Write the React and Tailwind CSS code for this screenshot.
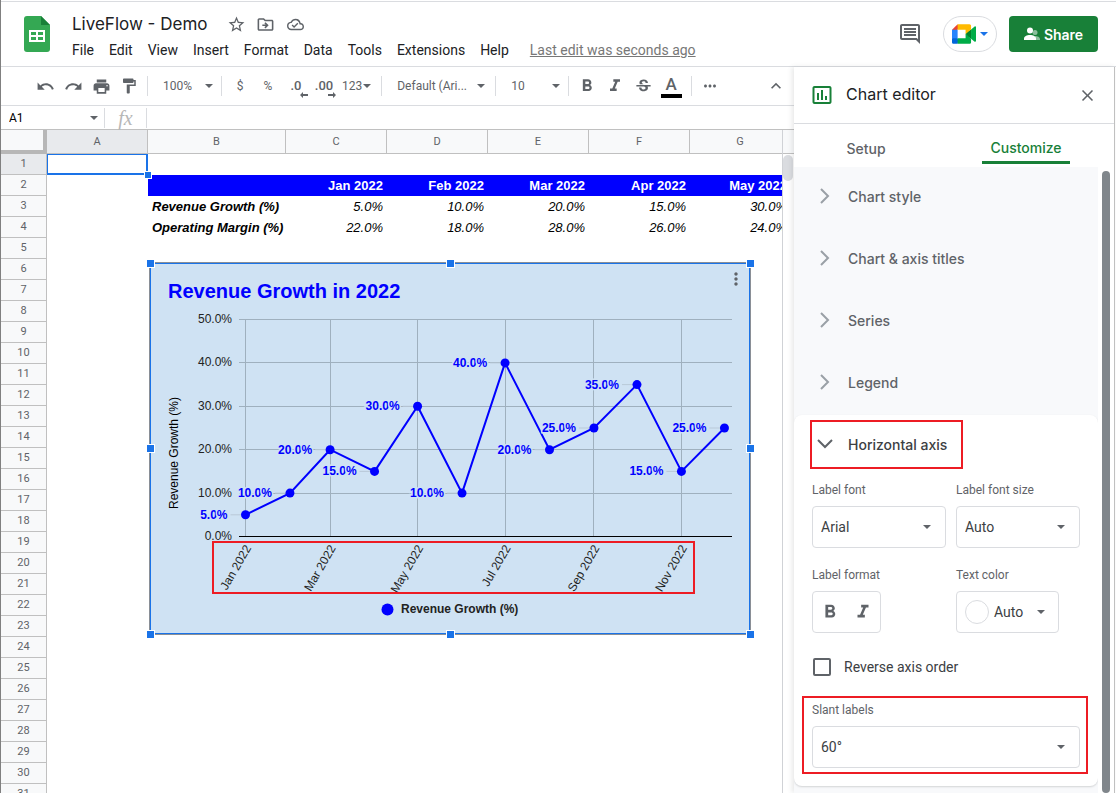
import React, { useState } from "react";
import {
  MdArrowDropDown,
  MdClose,
  MdExpandLess,
  MdFormatBold,
  MdFormatItalic,
  MdFormatPaint,
  MdInsertChartOutlined,
  MdMoreHoriz,
  MdMoreVert,
  MdOutlineCloudDone,
  MdOutlineDriveFileMove,
  MdOutlineInsertComment,
  MdPrint,
  MdRedo,
  MdStarBorder,
  MdStrikethroughS,
  MdUndo,
} from "react-icons/md";

const MENUS = ["File", "Edit", "View", "Insert", "Format", "Data", "Tools", "Extensions", "Help"];

const COLUMNS = ["A", "B", "C", "D", "E", "F", "G"];

const SHEET = {
  2: ["", "", "Jan 2022", "Feb 2022", "Mar 2022", "Apr 2022", "May 2022"],
  3: ["", "Revenue Growth (%)", "5.0%", "10.0%", "20.0%", "15.0%", "30.0%"],
  4: ["", "Operating Margin (%)", "22.0%", "18.0%", "28.0%", "26.0%", "24.0%"],
};

// day of year and growth in percent
const POINTS = [
  { day: 0, value: 5, label: "Jan 2022" },
  { day: 31, value: 10 },
  { day: 59, value: 20, label: "Mar 2022" },
  { day: 90, value: 15 },
  { day: 120, value: 30, label: "May 2022" },
  { day: 151, value: 10 },
  { day: 181, value: 40, label: "Jul 2022" },
  { day: 212, value: 20 },
  { day: 243, value: 25, label: "Sep 2022" },
  { day: 273, value: 35 },
  { day: 304, value: 15, label: "Nov 2022" },
  { day: 334, value: 25 },
];

const SECTIONS = ["Chart style", "Chart & axis titles", "Series", "Legend"];

const toX = (day) => 95.5 + day * 1.434;
const toY = (value) => 273.5 - value * 4.34;

const SheetsLogo = () => (
  <svg width="26" height="36" viewBox="0 0 26 36" aria-label="Sheets">
    <path d="M3 0h14l9 9v24a3 3 0 0 1-3 3H3a3 3 0 0 1-3-3V3a3 3 0 0 1 3-3z" fill="#34a853" />
    <path d="M17 0l9 9h-9z" fill="#188038" />
    <path d="M5 14v12h16V14zm2 2h5v3H7zm7 0h5v3h-5zm-7 5h5v3H7zm7 0h5v3h-5z" fill="#fff" fillRule="evenodd" />
  </svg>
);

const MeetLogo = () => (
  <svg width="24" height="20" viewBox="0 0 87.5 72">
    <path fill="#00832d" d="M49.5 36l8.53 9.75 11.47 7.33 2-17.02-2-16.64-11.69 6.44z" />
    <path fill="#0066da" d="M0 51.5V66c0 3.315 2.685 6 6 6h14.5l3-10.96-3-9.54-9.95-3z" />
    <path fill="#e94235" d="M20.5 0L0 20.5l10.55 3 9.95-3 2.95-9.41z" />
    <path fill="#2684fc" d="M20.5 20.5H0v31h20.5z" />
    <path fill="#00ac47" d="M82.6 8.68L69.5 19.42v33.66l13.16 10.79c1.97 1.54 4.85.135 4.85-2.37V11c0-2.535-2.945-3.925-4.91-2.32zM49.5 36v15.5h-29V72h43c3.315 0 6-2.685 6-6V53.08z" />
    <path fill="#ffba00" d="M63.5 0h-43v20.5h29V36l20-16.57V6c0-3.315-2.685-6-6-6z" />
  </svg>
);

const ShareIcon = () => (
  <svg width="16" height="14" viewBox="0 0 16 14" fill="#fff">
    <g opacity="0.5">
      <circle cx="11" cy="5.5" r="2.5" />
      <path d="M11 9c2.5 0 5 1.2 5 3v1h-5z" />
    </g>
    <circle cx="6" cy="3.5" r="3" />
    <path d="M6 8c3.2 0 6 1.5 6 3.5V13H0v-1.500C0 9.500 2.800 8 6 8z" />
  </svg>
);

const Caret = ({ className = "" }) => (
  <svg width="8" height="4" viewBox="0 0 8 4" className={`shrink-0 ${className}`}>
    <path d="M0 0h8L4 4z" fill="currentColor" />
  </svg>
);

const ToolButton = ({ label, children }) => (
  <button
    aria-label={label}
    className="relative w-7 h-7 shrink-0 flex items-center justify-center rounded hover:bg-gray-100"
  >
    {children}
  </button>
);

const Divider = ({ className = "" }) => <div className={`w-px h-5 shrink-0 bg-[#dadce0] ${className}`}></div>;

const ToolSelect = ({ label, value, className }) => (
  <div className={`relative shrink-0 flex items-center ${className}`}>
    <select aria-label={label} className="w-full appearance-none bg-transparent outline-none">
      <option>{value}</option>
    </select>
    <Caret className="absolute right-0 pointer-events-none" />
  </div>
);

const Header = () => (
  <header className="flex h-[66px] shrink-0 items-start border-y border-[#dadce0] pt-3.5 pl-[23px] pr-[18px]">
    <SheetsLogo />
    <div className="ml-[22px] flex-1 -mt-1">
      <div className="flex items-center text-[#5f6368] h-6">
        <h1 className="text-[17px] leading-6 text-[#202124] font-['Inter',sans-serif]">LiveFlow - Demo</h1>
        <button aria-label="Star" className="ml-5">
          <MdStarBorder size={19} />
        </button>
        <button aria-label="Move" className="ml-2.5">
          <MdOutlineDriveFileMove size={19} />
        </button>
        <button aria-label="Saved to Drive" className="ml-3">
          <MdOutlineCloudDone size={17} />
        </button>
      </div>
      <nav className="flex items-center gap-[15px] h-7 text-[14px] text-[#202124] whitespace-nowrap">
        {MENUS.map((menu) => (
          <button key={menu}>{menu}</button>
        ))}
        <a href="#history" className="ml-1.5 text-[#777] underline">
          Last edit was seconds ago
        </a>
      </nav>
    </div>
    <div className="flex items-center">
      <button aria-label="Comments" className="mr-[21px] text-[#5f6368]">
        <MdOutlineInsertComment size={24} />
      </button>
      <button
        aria-label="Meet"
        className="mr-3 w-[54px] h-9 rounded-full border border-[#dadce0] flex items-center justify-center gap-1 text-[#1a73e8]"
      >
        <MeetLogo />
        <Caret />
      </button>
      <button className="h-9 w-[89px] rounded bg-[#188038] text-white flex items-center justify-center gap-1 text-[14px] font-semibold font-['Inter',sans-serif]">
        <ShareIcon />
        Share
      </button>
    </div>
  </header>
);

const Toolbar = () => (
  <div className="flex h-[39px] shrink-0 items-center border-b border-[#dadce0] pl-[30px] pr-2 text-[12px] text-[#5f6368]">
    <ToolButton label="Undo"><MdUndo size={19} /></ToolButton>
    <ToolButton label="Redo"><MdRedo size={19} /></ToolButton>
    <ToolButton label="Print"><MdPrint size={19} /></ToolButton>
    <ToolButton label="Paint format"><MdFormatPaint size={18} /></ToolButton>
    <Divider className="ml-1 mr-[15px]" />
    <ToolSelect label="Zoom" value="100%" className="w-[50px]" />
    <Divider className="ml-2 mr-1" />
    <ToolButton label="Currency">$</ToolButton>
    <ToolButton label="Percent">%</ToolButton>
    <ToolButton label="Decrease decimal places">
      <span className="text-[13px] font-medium">.0</span>
      <svg width="8" height="6" viewBox="0 0 8 6" className="absolute right-0.5 bottom-0.5" fill="currentColor">
        <path d="M0 3l3-3v2h5v2H3v2z" />
      </svg>
    </ToolButton>
    <ToolButton label="Increase decimal places">
      <span className="text-[13px] font-medium">.00</span>
      <svg width="8" height="6" viewBox="0 0 8 6" className="absolute right-0.5 bottom-0.5" fill="currentColor">
        <path d="M8 3L5 0v2H0v2h5v2z" />
      </svg>
    </ToolButton>
    <button aria-label="More formats" className="ml-1 flex items-center">
      123
      <Caret className="ml-px" />
    </button>
    <Divider className="ml-2.5 mr-[15px]" />
    <ToolSelect label="Font" value="Default (Ari..." className="w-[88px]" />
    <Divider className="ml-2.5 mr-[15px]" />
    <ToolSelect label="Font size" value="10" className="w-[49px]" />
    <Divider className="ml-2 mr-1" />
    <ToolButton label="Bold"><MdFormatBold size={20} /></ToolButton>
    <ToolButton label="Italic"><MdFormatItalic size={20} /></ToolButton>
    <ToolButton label="Strikethrough"><MdStrikethroughS size={19} /></ToolButton>
    <ToolButton label="Text color">
      <span className="border-b-4 border-black w-[21px] text-center text-[17px] leading-5 font-medium">A</span>
    </ToolButton>
    <Divider className="ml-1.5 mr-1" />
    <ToolButton label="More"><MdMoreHoriz size={18} /></ToolButton>
    <button aria-label="Hide the menus" className="ml-auto">
      <MdExpandLess size={20} />
    </button>
  </div>
);

const FormulaBar = () => (
  <div className="flex h-6 shrink-0 items-center border-b border-[#c0c0c0] text-[#5f6368]">
    <div className="w-[103px] flex items-center pl-2 pr-1.5">
      <input aria-label="Name box" defaultValue="A1" className="w-full min-w-0 text-[12px] text-black outline-none" />
      <Caret />
    </div>
    <Divider />
    <span className="w-[41px] text-center text-[20px] leading-5 italic text-[#b7b7b7] font-['Liberation_Serif',serif]">fx</span>
    <Divider />
    <input aria-label="Formula" className="flex-1 min-w-0 px-2 outline-none" />
  </div>
);

const Handle = ({ x, y }) => <rect x={x} y={y} width="8" height="8" fill="#1a73e8" stroke="#fff" />;

const GrowthChart = () => {
  const line = POINTS.map((p) => `${toX(p.day)},${toY(p.value)}`).join(" ");

  return (
    <svg
      width="620"
      height="400"
      viewBox="-10 -13 620 400"
      className="block font-['Liberation_Sans',sans-serif] text-[12px]"
      role="img"
      aria-label="Revenue Growth in 2022"
    >
      <rect x="-0.500" y="-0.500" width="601" height="372" fill="#cfe2f3" stroke="#8a8f96" />
      <rect x="0.500" y="0.500" width="599" height="370" fill="none" stroke="#1a73e8" />
      <text x="18" y="35" fill="#0000ff" fontSize="20" fontWeight="bold">Revenue Growth in 2022</text>

      {/* grid and value axis */}
      {[10, 20, 30, 40, 50].map((v) => (
        <path key={v} d={`M89 ${Math.floor(toY(v)) + 0.5}H582`} stroke="#9fb0be" />
      ))}
      {POINTS.filter((p) => p.label).map((p) => (
        <path key={p.day} d={`M${Math.floor(toX(p.day)) + 0.5} 56V273`} stroke="#9fb0be" />
      ))}
      <path d="M89 273.5H582" stroke="#000" />
      {[0, 10, 20, 30, 40, 50].map((v) => (
        <text key={v} x="82" y={Math.floor(toY(v)) + 4} fill="#222" textAnchor="end">
          {v.toFixed(1)}%
        </text>
      ))}
      <text transform="translate(28 190) rotate(-90)" fill="#000" textAnchor="middle">
        Revenue Growth (%)
      </text>

      {/* series */}
      <polyline points={line} fill="none" stroke="#0000ff" strokeWidth="2" />
      {POINTS.map((p) => (
        <g key={p.day}>
          <path d={`M${toX(p.day) - 15} ${toY(p.value)}h11`} stroke="#b9c9d8" />
          <circle cx={toX(p.day)} cy={toY(p.value)} r="4.500" fill="#0000ff" />
          <text
            x={toX(p.day) - 18}
            y={Math.round(toY(p.value)) + 4}
            textAnchor="end"
            fontWeight="bold"
            fill="#0000ff"
            stroke="#cfe2f3"
            strokeWidth="3"
            paintOrder="stroke"
          >
            {p.value.toFixed(1)}%
          </text>
        </g>
      ))}

      {/* slanted labels */}
      {POINTS.filter((p) => p.label).map((p) => (
        <text
          key={p.day}
          transform={`translate(${toX(p.day) + 6} 285) rotate(-60)`}
          textAnchor="end"
          fill="#222"
        >
          {p.label}
        </text>
      ))}
      <rect x="63" y="279" width="481" height="51" fill="none" stroke="#ed1c24" strokeWidth="2" />

      <circle cx="237.500" cy="346.500" r="6" fill="#0000ff" />
      <text x="251" y="350" fill="#222" fontWeight="bold">Revenue Growth (%)</text>

      {[-3.5, 296.5, 596.5].map((x) =>
        [-3.5, 181.5, 367.5].map((y) =>
          x === 296.5 && y === 181.5 ? null : <Handle key={`${x} ${y}`} x={x} y={y} />
        )
      )}
    </svg>
  );
};

const Cell = ({ row, col, text }) => {
  if (row === 1 && col === 0) {
    return (
      <td className="relative border-t border-l border-r-2 border-b-2 border-[#1a73e8]">
        <span className="absolute -right-1.5 -bottom-1.5 z-10 w-2 h-2 bg-[#1a73e8] border border-white"></span>
      </td>
    );
  }
  if (row === 2 && col > 0) {
    return <td className="bg-[#0000ff] px-1 text-right font-bold text-white">{text}</td>;
  }
  return <td className={`px-1 italic ${col === 1 ? "font-bold" : "text-right"}`}>{text}</td>;
};

const Sheet = () => {
  const rows = Array.from({ length: 31 }, (_, i) => i + 1);

  return (
    <div className="flex flex-1 min-h-0">
      <div className="relative flex-1 min-w-0 overflow-hidden border-r border-[#d0d2d6]">
        <table className="w-[790px] table-fixed border-separate border-spacing-0 text-[13px] leading-4 text-black whitespace-nowrap font-['Liberation_Sans',sans-serif]">
          <colgroup>
            <col className="w-[46px]" />
            <col className="w-[101px]" />
            <col className="w-[138px]" />
            {COLUMNS.slice(2).map((c) => (
              <col key={c} className="w-[101px]" />
            ))}
          </colgroup>
          <thead>
            <tr className="h-6 text-[11px] text-[#5f6368] font-['Roboto',sans-serif]">
              <th className="border-r-4 border-b-4 border-[#b7b7b7] bg-[#f8f9fa]"></th>
              {COLUMNS.map((c) => (
                <th
                  key={c}
                  className={`border-r border-b border-[#c0c0c0] p-0 font-normal ${c === "A" ? "bg-[#e8eaed]" : "bg-[#f8f9fa]"}`}
                >
                  {c}
                </th>
              ))}
            </tr>
          </thead>
          <tbody>
            {rows.map((row) => (
              <tr key={row} className="h-[21px]">
                <th
                  className={`border-r border-b border-[#c0c0c0] p-0 text-[11px] font-normal text-[#5f6368] font-['Roboto',sans-serif] ${row === 1 ? "bg-[#e8eaed]" : "bg-[#f8f9fa]"}`}
                >
                  {row}
                </th>
                {COLUMNS.map((c, col) => (
                  <Cell key={c} row={row} col={col} text={SHEET[row]?.[col] || ""} />
                ))}
              </tr>
            ))}
          </tbody>
        </table>
        {/* floating chart */}
        <div className="absolute left-[139px] top-[120px]">
          <GrowthChart />
          <button aria-label="Chart menu" className="absolute right-3.5 top-[19px] text-[#5f6368]">
            <MdMoreVert size={20} />
          </button>
        </div>
      </div>
      <div className="w-[11px] shrink-0">
        <div className="h-6 bg-[#f8f9fa] border-b border-[#c0c0c0]"></div>
        <div className="mt-px mr-px h-[26px] rounded-full bg-[#dadce0]"></div>
      </div>
    </div>
  );
};

const Chevron = ({ open }) => (
  <svg width="18" height="18" viewBox="0 0 18 18" fill="none" strokeWidth="2" stroke={open ? "#5f6368" : "#9aa0a6"} className="shrink-0">
    <path d={open ? "M2 5l7 7 7-7" : "M5 2l7 7-7 7"} />
  </svg>
);

const Field = ({ id, label, value }) => (
  <div>
    <label htmlFor={id} className="block text-[12px] leading-4 text-[#5f6368]">{label}</label>
    <div className="relative mt-2 flex items-center">
      <select
        id={id}
        className="w-full h-[42px] appearance-none rounded border border-[#dadce0] bg-white px-2 text-[14px] text-[#3c4043] outline-none"
      >
        <option>{value}</option>
      </select>
      <Caret className="absolute right-[15px] pointer-events-none text-[#5f6368]" />
    </div>
  </div>
);

const AxisPanel = () => {
  const [reverse, setReverse] = useState(false);

  return (
    <section className="rounded-lg bg-white pb-[18px] shadow-[0_1px_2px_rgba(60,64,67,0.2)]">
      <div className="relative">
        <button className="flex h-[60px] w-full items-center gap-3.5 pb-0.5 pl-[22px] font-['Inter',sans-serif] text-[14px] font-medium text-[#3c4043]">
          <Chevron open />
          Horizontal axis
        </button>
        <div className="absolute left-4 top-[5px] w-[153px] h-[49px] border-2 border-[#ed1c24] pointer-events-none"></div>
      </div>

      <div className="mt-[7px] grid grid-cols-[134fr_124fr] gap-x-2.5 gap-y-[19px] px-[18px]">
        <Field id="label-font" label="Label font" value="Arial" />
        <Field id="label-size" label="Label font size" value="Auto" />
        <div>
          <p className="text-[12px] leading-4 text-[#5f6368]">Label format</p>
          <div className="mt-2 flex h-[42px] w-[69px] items-center justify-around rounded border border-[#dadce0] text-[#5f6368]">
            <button aria-label="Bold labels"><MdFormatBold size={22} /></button>
            <button aria-label="Italic labels"><MdFormatItalic size={22} /></button>
          </div>
        </div>
        <div>
          <p className="text-[12px] leading-4 text-[#5f6368]">Text color</p>
          <button
            aria-label="Text color"
            className="mt-2 flex h-[42px] w-[103px] items-center rounded border border-[#dadce0] pl-2 text-[14px] text-[#3c4043]"
          >
            <span className="mr-[5px] w-6 h-6 rounded-full border border-[#dadce0]"></span>
            Auto
            <Caret className="ml-auto mr-[13px] text-[#5f6368]" />
          </button>
        </div>
      </div>

      <div className="mt-6 flex items-center px-[18px]">
        <input
          id="reverse"
          type="checkbox"
          checked={reverse}
          onChange={() => setReverse(!reverse)}
          className="ml-px w-[18px] h-[18px] appearance-none rounded-xs border-2 border-[#5f6368] checked:bg-[#188038]"
        />
        <label htmlFor="reverse" className="ml-[13px] text-[14px] leading-5 text-[#3c4043]">Reverse axis order</label>
      </div>

      <div className="relative mt-[25px] px-[18px]">
        <Field id="slant" label="Slant labels" value="60°" />
        <div className="absolute left-2 right-2.5 -top-1.5 -bottom-1.5 border-2 border-[#ed1c24] pointer-events-none"></div>
      </div>
    </section>
  );
};

const ChartEditor = () => (
  <aside className="flex w-[321px] shrink-0 flex-col border-r border-[#c0c0c0] bg-white shadow-[-2px_0_5px_rgba(60,64,67,0.12)]">
    <div className="flex h-[57px] shrink-0 items-center border-b border-[#dadce0] pl-4 pr-[17px]">
      <MdInsertChartOutlined size={24} className="text-[#188038]" />
      <h2 className="ml-3 flex-1 pb-0.5 text-[16px] text-[#202124] font-['Inter',sans-serif]">Chart editor</h2>
      <button aria-label="Close" className="text-[#5f6368]">
        <MdClose size={19} />
      </button>
    </div>
    <div className="flex h-10 shrink-0 font-['Inter',sans-serif] text-[14px] font-medium">
      <button className="w-36 pt-2 text-[#5f6368]">Setup</button>
      <div className="flex flex-1 justify-center">
        <button className="w-[88px] border-b-3 border-[#188038] pt-2.5 text-[#188038]">Customize</button>
      </div>
    </div>
    <div className="mt-[3px] flex min-h-0 flex-1">
      <div className="flex-1 overflow-hidden bg-[#f8f9fb]">
        {SECTIONS.map((name) => (
          <button
            key={name}
            className="flex h-[62px] w-full items-center gap-3.5 pb-1 pl-[22px] font-['Inter',sans-serif] text-[14px] font-medium text-[#5f6368]"
          >
            <Chevron />
            {name}
          </button>
        ))}
        <AxisPanel />
      </div>
      <div className="w-4 shrink-0 px-1 pt-1">
        <div className="h-full rounded-full bg-[#80868b]"></div>
      </div>
    </div>
  </aside>
);

const App = () => {
  return (
    <div className="flex h-screen flex-col overflow-hidden border-l border-[#808080] bg-white pt-px font-['Roboto',sans-serif]">
      <Header />
      <div className="flex min-h-0 flex-1 pr-px">
        <main className="flex min-w-0 flex-1 flex-col">
          <Toolbar />
          <FormulaBar />
          <Sheet />
        </main>
        <ChartEditor />
      </div>
    </div>
  );
};

export default App;
